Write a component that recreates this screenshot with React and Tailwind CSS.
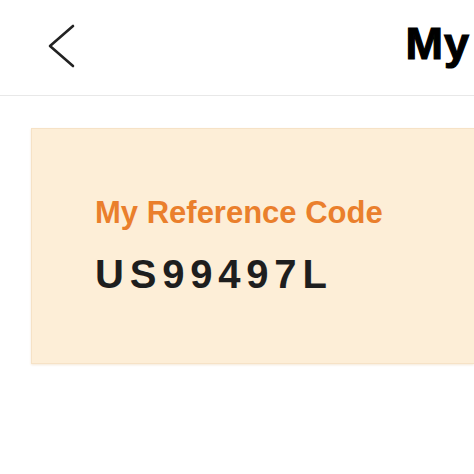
import React from 'react'

export default function App() {
  return (
    <div className="w-[474px] h-[474px] overflow-hidden bg-white" style={{ fontFamily: '"Liberation Sans", Arial, sans-serif' }}>
      <header className="flex items-center h-[96px] border-b border-[#e8e8e8]">
        <button className="ml-[46px] mt-[-4px] w-[30px] h-[46px] flex items-center justify-center text-[#222]">
          <svg width="30" height="46" viewBox="0 0 30 46" fill="none" stroke="currentColor" strokeWidth="2.6" strokeLinecap="round" strokeLinejoin="round">
            <path d="M27 3 L4 23 L27 43" />
          </svg>
        </button>
        <h1 className="ml-auto mr-[4px] mt-[-8px] text-[45px] font-bold tracking-[1px] leading-none text-black [-webkit-text-stroke:1.2px_black]">My</h1>
      </header>

      <main className="pt-[32px] pl-[31px]">
        <div className="h-[236px] bg-[#fdeed7] border-y border-l border-[#f6e2c6] shadow-[0_1px_2px_rgba(230,200,160,0.4)] pl-[63px] pt-[66px]">
          <p className="text-[31px] leading-[36px] font-bold text-[#ea7f2c]">My Reference Code</p>
          <p className="mt-[19px] text-[40px] leading-[48px] font-bold tracking-[5.8px] text-[#1e1e1e]">US99497L</p>
        </div>
      </main>
    </div>
  )
}
